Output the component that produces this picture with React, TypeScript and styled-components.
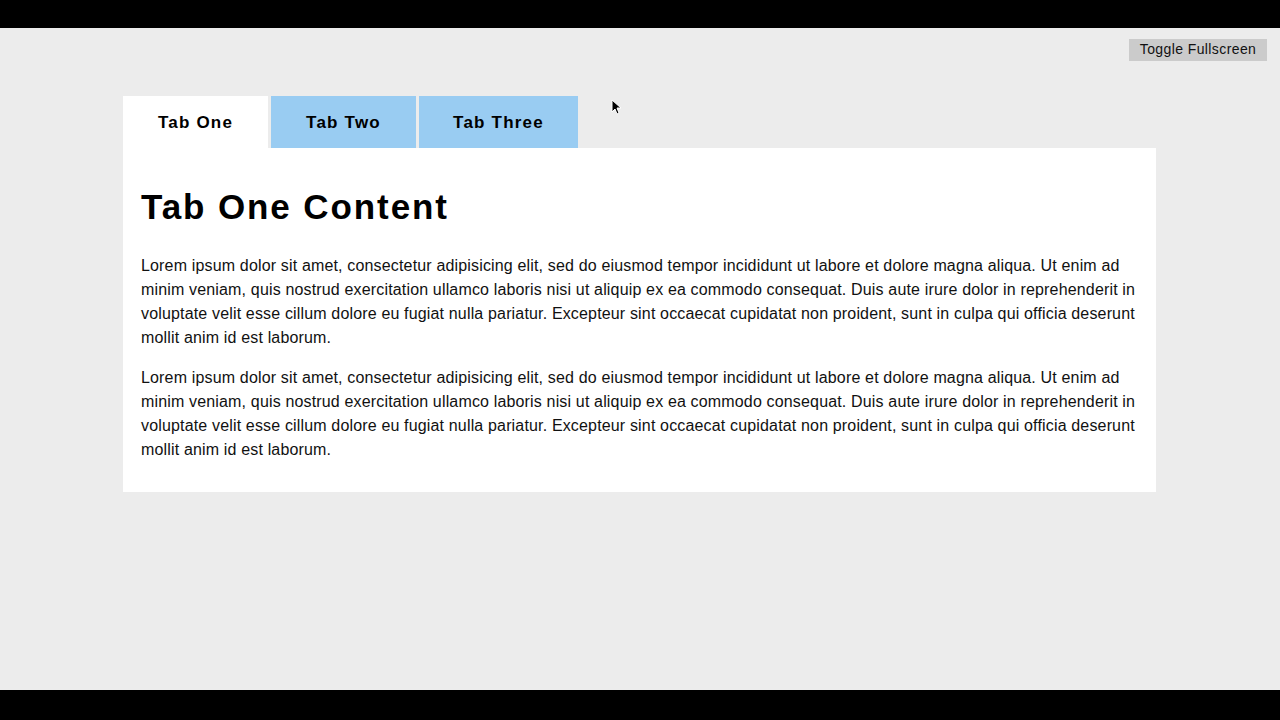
import React, { useState } from "react";
import styled, { createGlobalStyle } from "styled-components";

const Global = createGlobalStyle`
  body { margin: 0; background: #000; font-family: "Liberation Sans", Arial, sans-serif; }
`;

const Frame = styled.div`
  display: flex;
  flex-direction: column;
  height: 720px;
  padding-top: 28px;
  padding-bottom: 30px;
  box-sizing: border-box;
`;

const Stage = styled.div`
  flex: 1;
  background: #ececec;
  position: relative;
  padding: 68px 124px 0 123px;
`;

const ToggleButton = styled.button`
  position: absolute;
  top: 11px;
  right: 13px;
  width: 138px;
  height: 22px;
  border: none;
  background: #cbcbcb;
  color: #111;
  font-family: "Liberation Sans", Arial, sans-serif;
  font-size: 14px;
  letter-spacing: 0.4px;
  padding: 0 0 2px;
`;

const TabBar = styled.div`
  display: flex;
  gap: 3px;
  height: 52px;
`;

const Tab = styled.button<{ $active: boolean; $w: number }>`
  width: ${(p) => p.$w}px;
  border: none;
  background: ${(p) => (p.$active ? "#fff" : "#99ccf2")};
  font-family: "Liberation Sans", Arial, sans-serif;
  font-weight: bold;
  font-size: 17px;
  letter-spacing: 1.2px;
  color: #000;
  padding: 2px 0 0;
  cursor: pointer;
`;

const Panel = styled.div`
  background: #fff;
  width: 1033px;
  padding: 25px 18px 30px;
  box-sizing: border-box;
`;

const Heading = styled.h1`
  margin: 14px 0 27px;
  font-size: 35px;
  letter-spacing: 1.9px;
  font-weight: bold;
  line-height: 40px;
`;

const Para = styled.p`
  margin: 0 0 16px;
  font-size: 16px;
  letter-spacing: 0.16px;
  line-height: 24px;
  color: #111;
  &:last-child { margin-bottom: 0; }
`;

const Cursor = styled.svg`
  position: absolute;
  left: 611px;
  top: 71px;
`;

const lorem =
  "Lorem ipsum dolor sit amet, consectetur adipisicing elit, sed do eiusmod tempor incididunt ut labore et dolore magna aliqua. Ut enim ad minim veniam, quis nostrud exercitation ullamco laboris nisi ut aliquip ex ea commodo consequat. Duis aute irure dolor in reprehenderit in voluptate velit esse cillum dolore eu fugiat nulla pariatur. Excepteur sint occaecat cupidatat non proident, sunt in culpa qui officia deserunt mollit anim id est laborum.";

const tabs = [
  { name: "Tab One", w: 145 },
  { name: "Tab Two", w: 145 },
  { name: "Tab Three", w: 159 },
];

export default function App() {
  const [active, setActive] = useState(0);
  return (
    <Frame>
      <Global />
      <Stage>
        <ToggleButton>Toggle Fullscreen</ToggleButton>
        <TabBar>
          {tabs.map((t, i) => (
            <Tab key={t.name} $w={t.w} $active={i === active} onClick={() => setActive(i)}>
              {t.name}
            </Tab>
          ))}
        </TabBar>
        <Panel>
          <Heading>{tabs[active].name} Content</Heading>
          <Para>{lorem}</Para>
          <Para>{lorem}</Para>
        </Panel>
        <Cursor width="10" height="16" viewBox="0 0 10 16">
          <path d="M1 1 L1 13 L4 10 L6 15 L8 14 L6 9 L10 9 Z" fill="#000" stroke="#fff" strokeWidth="1" />
        </Cursor>
      </Stage>
    </Frame>
  );
}
